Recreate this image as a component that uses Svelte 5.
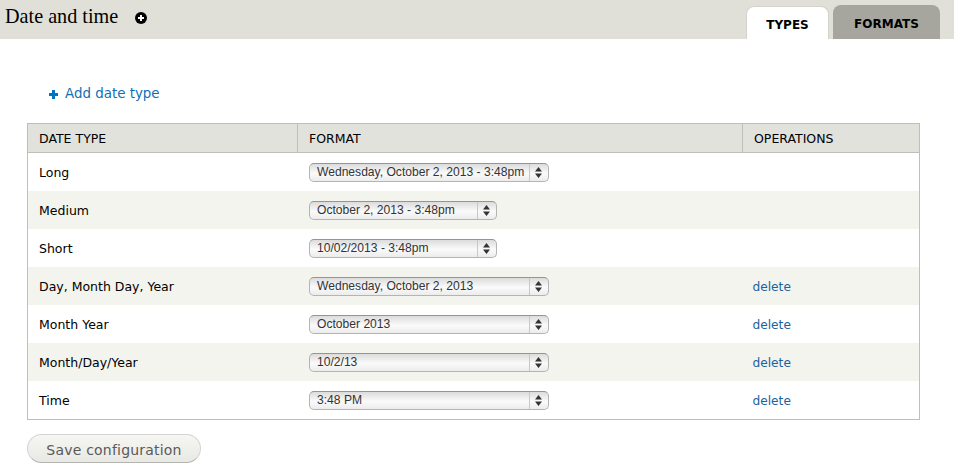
<script lang="ts">
	const rows = [
		{ name: 'Long', value: 'Wednesday, October 2, 2013 - 3:48pm', short: false, remove: false },
		{ name: 'Medium', value: 'October 2, 2013 - 3:48pm', short: true, remove: false },
		{ name: 'Short', value: '10/02/2013 - 3:48pm', short: true, remove: false },
		{ name: 'Day, Month Day, Year', value: 'Wednesday, October 2, 2013', short: false, remove: true },
		{ name: 'Month Year', value: 'October 2013', short: false, remove: true },
		{ name: 'Month/Day/Year', value: '10/2/13', short: false, remove: true },
		{ name: 'Time', value: '3:48 PM', short: false, remove: true }
	];
</script>

<header class="top">
	<h1 class="title">Date and time</h1>
	<svg class="shortcut" width="12" height="12" viewBox="0 0 12 12" aria-hidden="true">
		<circle cx="6" cy="6" r="6" fill="#000" />
		<path d="M6 3v6M3 6h6" stroke="#fff" stroke-width="2" />
	</svg>
	<nav class="tabs">
		<a class="tab active" href="#types">Types</a>
		<a class="tab" href="#formats">Formats</a>
	</nav>
</header>

<main class="content">
	<a class="add" href="#add">
		<svg width="9" height="9" viewBox="0 0 9 9" aria-hidden="true">
			<path d="M4.5 0v9M0 4.5h9" stroke="#0074bd" stroke-width="3" />
		</svg>
		Add date type
	</a>

	<table class="types">
		<thead>
			<tr>
				<th class="col-name">Date type</th>
				<th class="col-format">Format</th>
				<th>Operations</th>
			</tr>
		</thead>
		<tbody>
			{#each rows as row}
				<tr>
					<td>{row.name}</td>
					<td>
						<div class="select" class:short={row.short}>
							<span class="value">{row.value}</span>
							<span class="arrows">
								<svg width="7" height="11" viewBox="0 0 7 11" aria-hidden="true">
									<path d="M3.5 0L7 4.4H0zM3.5 11L0 6.6h7z" fill="#333" />
								</svg>
							</span>
						</div>
					</td>
					<td>
						{#if row.remove}
							<a class="link" href="#delete">delete</a>
						{/if}
					</td>
				</tr>
			{/each}
		</tbody>
	</table>

	<button class="save" type="button">Save configuration</button>
</main>

<style>
	:global(body) {
		background: #fff;
		font-family: 'DejaVu Sans', Verdana, sans-serif;
		overflow: hidden;
	}

	.top {
		display: flex;
		align-items: flex-start;
		height: 39px;
		padding: 0 14px 0 5px;
		box-sizing: border-box;
		background: #e0e0d8;
	}

	.title {
		margin: 4px 0 0;
		font-family: 'Liberation Serif', 'Times New Roman', serif;
		font-size: 20.2px;
		line-height: 24px;
		font-weight: 400;
		color: #000;
	}

	.shortcut {
		margin: 12px 0 0 17px;
	}

	.tabs {
		display: flex;
		gap: 4px;
		margin-left: auto;
		padding-top: 5px;
	}

	.tab {
		box-sizing: border-box;
		width: 107px;
		height: 34px;
		padding-top: 11px;
		border-radius: 8px 8px 0 0;
		background: #a6a69e;
		color: #000;
		font-size: 12px;
		line-height: 16px;
		font-weight: 700;
		text-align: center;
		text-transform: uppercase;
		text-decoration: none;
		white-space: nowrap;
	}

	.tab.active {
		width: 83px;
		margin-top: 1px;
		height: 33px;
		padding-top: 10px;
		background: #fff;
		border: 1px solid #d4d4cc;
		border-bottom: 0;
	}

	.content {
		padding: 45px 34px 0 27px;
	}

	.add {
		display: flex;
		align-items: center;
		gap: 7px;
		height: 20px;
		margin-left: 22px;
		color: #0f6fb5;
		font-size: 13.4px;
		line-height: 20px;
		text-decoration: none;
	}

	.types {
		width: 893px;
		margin-top: 19px;
		table-layout: fixed;
		border-collapse: collapse;
		border: 1px solid #bebfb9;
		font-size: 12.5px;
		color: #000;
	}

	thead tr {
		height: 29px;
		background: #e1e2dc;
	}

	th {
		padding: 0 11px;
		border: 1px solid #bebfb9;
		font-size: 12.5px;
		font-weight: 400;
		text-align: left;
		text-transform: uppercase;
	}

	.col-name {
		width: 270px;
		box-sizing: border-box;
	}

	.col-format {
		width: 445px;
		box-sizing: border-box;
	}

	tbody tr {
		height: 38px;
		background: #fff;
	}

	tbody tr:nth-child(even) {
		background: #f3f4ee;
	}

	tbody tr:last-child {
		height: 39px;
	}

	td {
		padding: 2px 11px 0;
	}

	tbody tr:last-child td {
		padding-bottom: 1px;
	}

	td:last-child {
		padding-left: 10px;
	}

	.select {
		display: flex;
		align-items: stretch;
		box-sizing: border-box;
		width: 240px;
		height: 19px;
		border: 1px solid #b4b4b4;
		border-top-color: #959595;
		border-radius: 5px;
		background: linear-gradient(#dcdcdc, #fafafa 55%, #ececec);
		font-family: 'Liberation Sans', Arial, sans-serif;
		font-size: 12.1px;
		line-height: 16px;
		color: #333;
	}

	.select.short {
		width: 188px;
	}

	.value {
		flex: 1;
		padding-left: 7.5px;
		white-space: nowrap;
	}

	.arrows {
		display: flex;
		align-items: center;
		justify-content: center;
		width: 18px;
		border-left: 1px solid #c8c8c8;
	}

	.link {
		color: #1a639f;
		font-size: 12.2px;
		text-decoration: none;
	}

	.save {
		display: block;
		box-sizing: border-box;
		width: 174px;
		height: 29px;
		margin-top: 14px;
		padding: 2px 0 0;
		border: 1px solid #d4d4d4;
		border-bottom-color: #b4b4b0;
		border-radius: 15px;
		background: linear-gradient(#f6f6f3, #e8e8e4);
		color: #5a5a5a;
		font-family: 'DejaVu Sans', Verdana, sans-serif;
		font-size: 14px;
		letter-spacing: 0.2px;
	}
</style>
